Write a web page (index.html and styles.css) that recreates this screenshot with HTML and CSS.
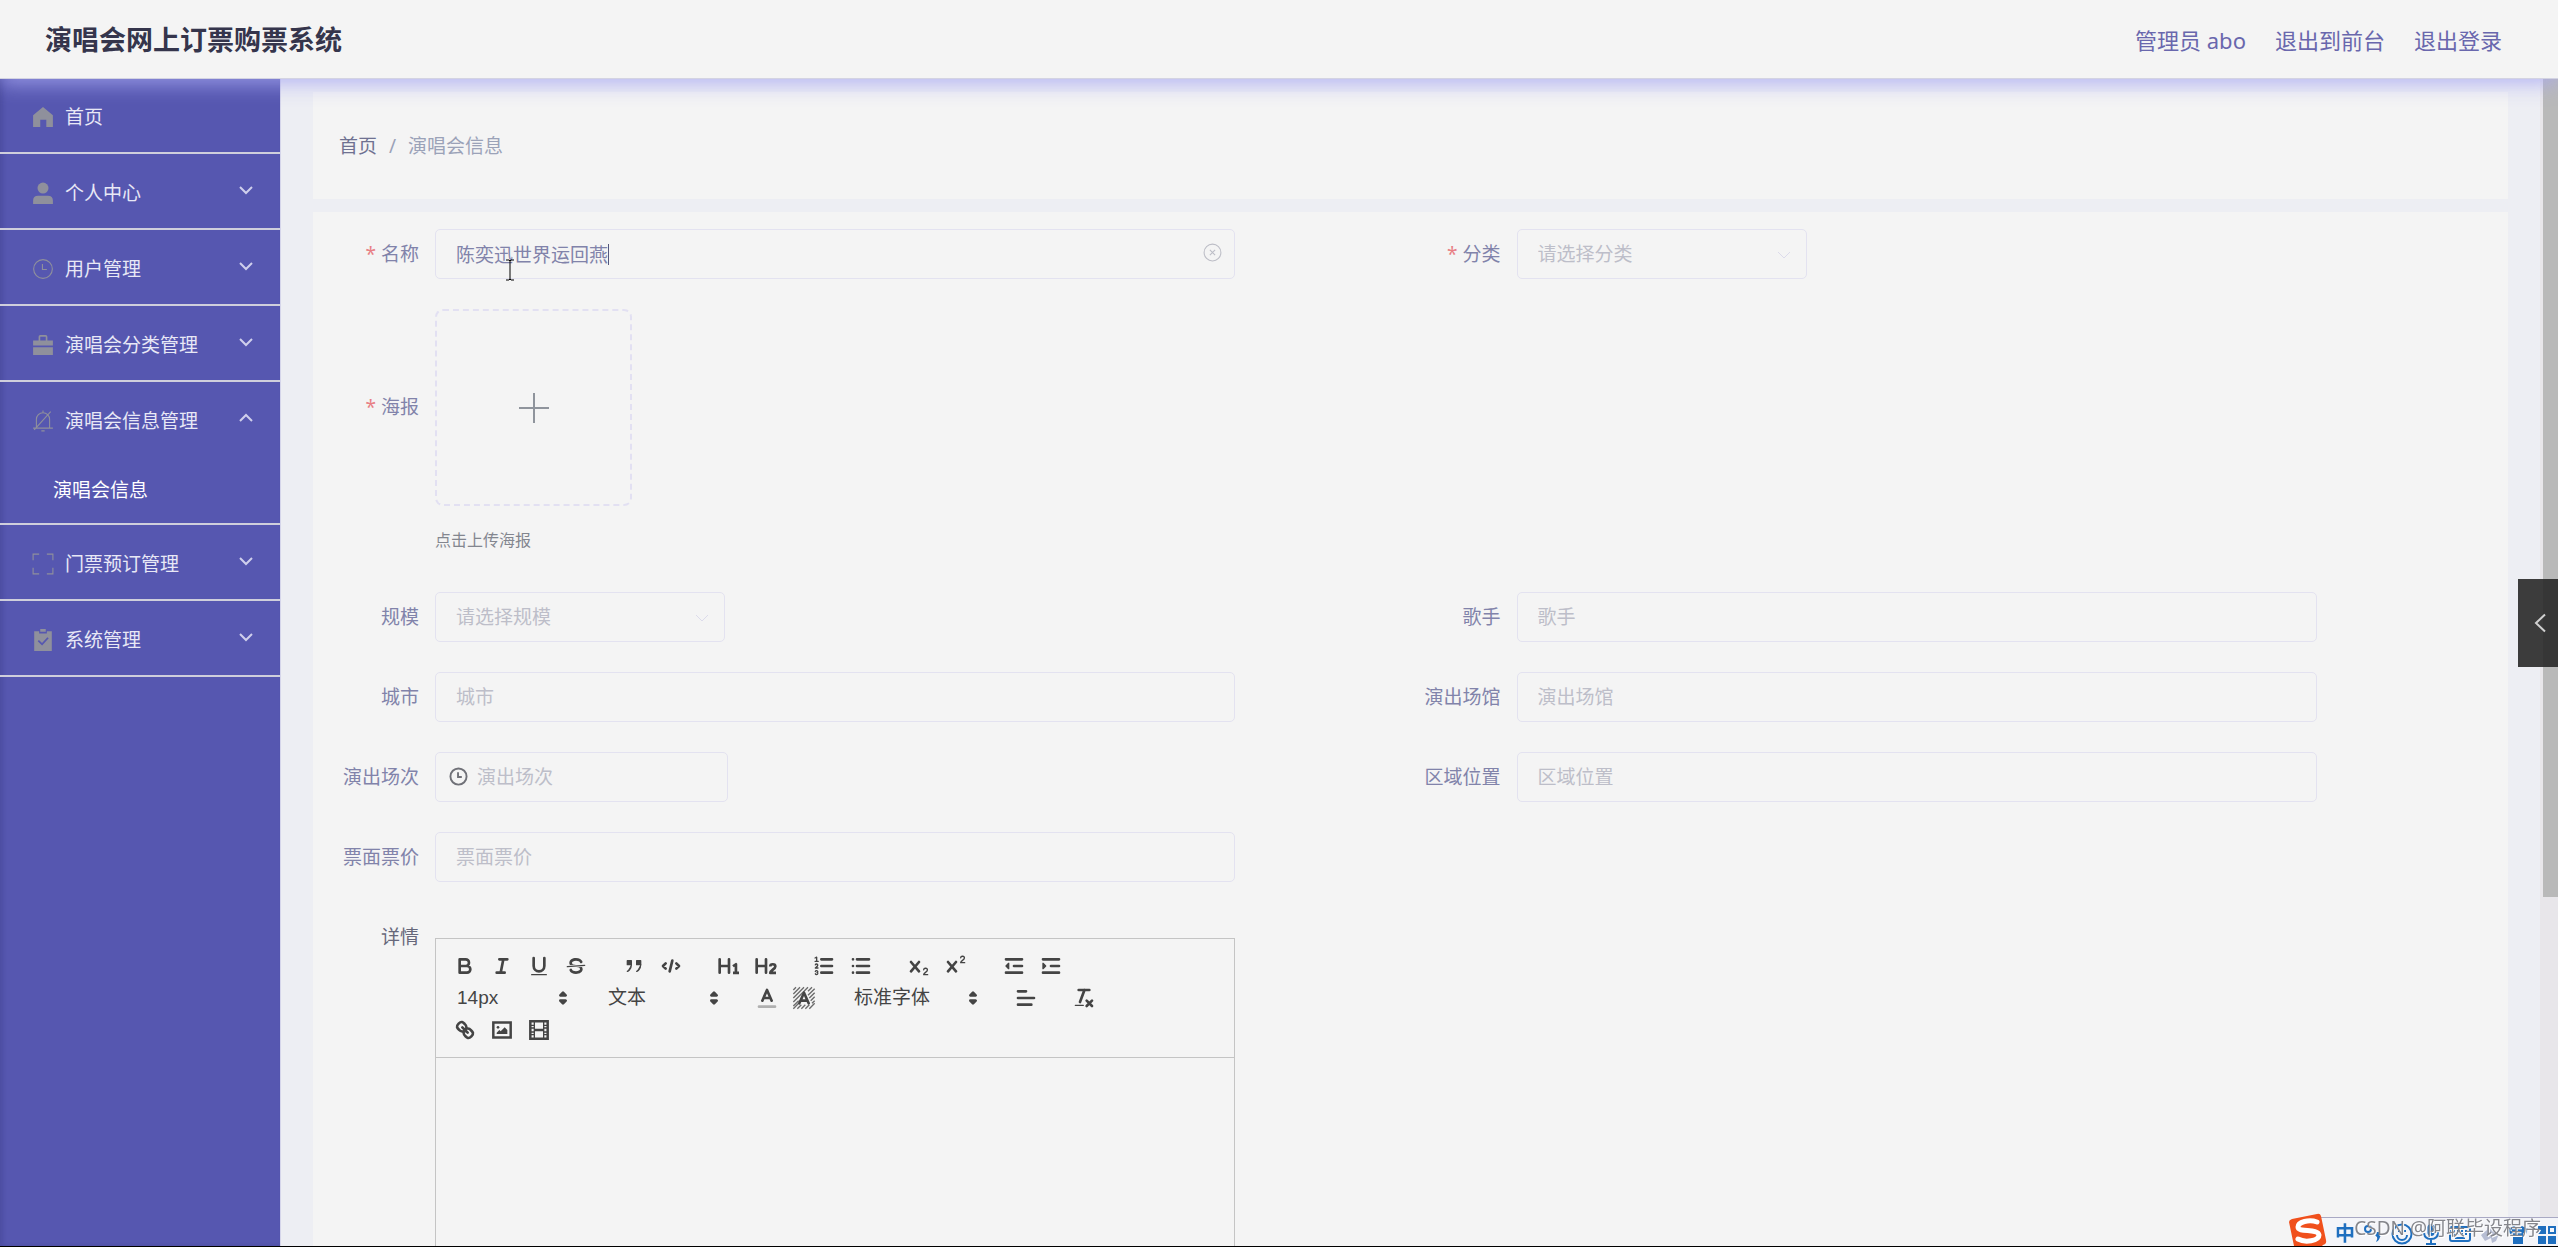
FILE: index.html
```html
<!DOCTYPE html>
<html lang="zh-CN">
<head>
<meta charset="utf-8">
<title>演唱会网上订票购票系统</title>
<link rel="stylesheet" href="styles.css">
</head>
<body>
<svg class="defs" aria-hidden="true">
  <symbol id="down" viewBox="0 0 16 10"><path d="M2 2l6 6 6-6"/></symbol>
  <symbol id="sorter" viewBox="0 0 18 18"><path d="M7 11l2 2 2-2zM7 7l2-2 2 2z"/></symbol>
  <symbol id="clock" viewBox="0 0 20 20"><circle cx="10" cy="10" r="8.5"/><path d="M9.500 5.500v5h4"/></symbol>
</svg>
<div class="app">
  <header class="topbar">
    <h1 class="brand">演唱会网上订票购票系统</h1>
    <nav class="account">
      <span>管理员 abo</span>
      <a href="#front">退出到前台</a>
      <a href="#logout">退出登录</a>
    </nav>
  </header>
  <div class="body">
    <aside class="sidebar">
      <ul class="menu">
        <li><a href="#home"><svg class="mi solid" viewBox="0 0 20 20"><path d="M10 1l9 7.500V19h-6v-6.500H7.500V19H1V8.500z"/></svg><span>首页</span></a></li>
        <li><a href="#me"><svg class="mi solid" viewBox="0 0 20 20"><circle cx="10" cy="5.500" r="5"/><path d="M1 20v-3q0-4.500 4.500-4.500h9q4.500 0 4.500 4.500v3z"/></svg><span>个人中心</span><svg class="chev"><use href="#down"/></svg></a></li>
        <li><a href="#users"><svg class="mi line" viewBox="0 0 20 20"><use href="#clock"/></svg><span>用户管理</span><svg class="chev"><use href="#down"/></svg></a></li>
        <li><a href="#types"><svg class="mi solid" viewBox="0 0 20 20"><path d="M1 6h5V2.500Q6 1 7.500 1h5Q14 1 14 2.500V6h5v4.500H1zM7.500 2.500V6h5V2.500zM1 12h18v7H1z"/></svg><span>演唱会分类管理</span><svg class="chev"><use href="#down"/></svg></a></li>
        <li>
          <a href="#concerts"><svg class="mi line" viewBox="0 0 20 20"><path d="M4 16V8.500a6 6 0 0 1 12 0V16M1 16.500h18M2 18L17 1.500M10 .5v2M8.500 19h3"/></svg><span>演唱会信息管理</span><svg class="chev up"><use href="#down"/></svg></a>
          <a class="sub" href="#concert">演唱会信息</a>
        </li>
        <li><a href="#orders"><svg class="mi line" viewBox="0 0 20 20"><path d="M1 6.500V1h5.500M13.500 1H19v5.500M19 13.500V19h-5.500M6.500 19H1v-5.500"/></svg><span>门票预订管理</span><svg class="chev"><use href="#down"/></svg></a></li>
        <li><a href="#system"><svg class="mi solid" viewBox="0 0 20 20"><path fill-rule="evenodd" d="M2 2h4.500v2h7V2H18v18H2zM5.200 11.200l4 3.800 6-6.500-1.200-1-4.900 5.300-2.800-2.700zM7.500 0h5v2.500h-5z"/></svg><span>系统管理</span><svg class="chev"><use href="#down"/></svg></a></li>
      </ul>
    </aside>
    <main class="content">
      <nav class="card crumbs"><a href="#home">首页</a><span class="slash">/</span><span>演唱会信息</span></nav>
      <form class="card form">
        <div class="item">
          <label class="req" for="name">名称</label>
          <div class="ctl caret"><input id="name" type="text" value="陈奕迅世界运回燕">
            <svg class="clear" viewBox="0 0 20 20"><circle cx="10" cy="10" r="8"/><path d="M7.500 7.500l5 5M12.500 7.500l-5 5"/></svg></div>
        </div>
        <div class="item">
          <label class="req" for="type">分类</label>
          <div class="ctl short"><select id="type"><option>请选择分类</option></select><svg class="arrow"><use href="#down"/></svg></div>
        </div>
        <div class="item full">
          <label class="req tall" for="poster">海报</label>
          <div class="uploader">
            <button class="drop" id="poster" type="button" aria-label="上传海报"><svg viewBox="0 0 32 32"><path d="M16 1v30M1 16h30"/></svg></button>
            <p class="tip">点击上传海报</p>
          </div>
        </div>
        <div class="item">
          <label for="scale">规模</label>
          <div class="ctl short"><select id="scale"><option>请选择规模</option></select><svg class="arrow"><use href="#down"/></svg></div>
        </div>
        <div class="item"><label for="singer">歌手</label><div class="ctl"><input id="singer" type="text" placeholder="歌手"></div></div>
        <div class="item"><label for="city">城市</label><div class="ctl"><input id="city" type="text" placeholder="城市"></div></div>
        <div class="item"><label for="venue">演出场馆</label><div class="ctl"><input id="venue" type="text" placeholder="演出场馆"></div></div>
        <div class="item"><label for="time">演出场次</label><div class="ctl short date"><svg class="when" viewBox="0 0 20 20"><use href="#clock"/></svg><input id="time" type="text" placeholder="演出场次"></div></div>
        <div class="item"><label for="area">区域位置</label><div class="ctl"><input id="area" type="text" placeholder="区域位置"></div></div>
        <div class="item full-row"><label for="price">票面票价</label><div class="ctl"><input id="price" type="text" placeholder="票面票价"></div></div>
        <div class="item">
          <label class="dark" for="detail">详情</label>
          <div class="editor">
            <div class="tools">
              <span class="group">
                <button type="button" aria-label="粗体"><svg viewBox="0 0 18 18"><path d="M5 4H9.500A2.500 2.500 0 0 1 9.500 9H5zM5 9h5.500A2.500 2.500 0 0 1 10.500 14H5z"/></svg></button>
                <button type="button" aria-label="斜体"><svg viewBox="0 0 18 18"><path d="M7 4h6M5 14h6M8 14L10 4"/></svg></button>
                <button type="button" aria-label="下划线"><svg viewBox="0 0 18 18"><path d="M5 3V9a4 4 0 0 0 8 0V3"/><rect class="f" x="3" y="15" width="12" height="1" rx=".5"/></svg></button>
                <button type="button" aria-label="删除线"><svg viewBox="0 0 18 18"><path class="thin" d="M15.500 8.500l-13 1"/><path class="f" d="M9.007,8C6.542,7.791,6,7.519,6,6.500,6,5.792,7.283,5,9,5c1.571,0,2.765.679,2.969,1.309a1,1,0,0,0,1.900-.617C13.356,4.106,11.354,3,9,3,6.200,3,4,4.538,4,6.500a3.200,3.200,0,0,0,.5,1.843Z"/><path class="f" d="M8.984,10C11.457,10.208,12,10.479,12,11.500c0,0.708-1.283,1.500-3,1.500-1.571,0-2.765-.679-2.969-1.309a1,1,0,1,0-1.900.617C4.644,13.894,6.646,15,9,15c2.800,0,5-1.538,5-3.500a3.200,3.200,0,0,0-.5-1.843Z"/></svg></button>
              </span>
              <span class="group">
                <button type="button" aria-label="引用"><svg viewBox="0 0 18 18"><path class="fs" d="M4 5h3v3H4zM11 5h3v3h-3z"/><path class="fs" d="M7,8c0,4.031-3,5-3,5M14,8c0,4.031-3,5-3,5"/></svg></button>
                <button type="button" aria-label="代码"><svg viewBox="0 0 18 18"><path d="M5 7L3 9l2 2M13 7l2 2-2 2M10 5L8 13"/></svg></button>
              </span>
              <span class="group">
                <button type="button" aria-label="一级标题"><svg viewBox="0 0 18 18"><path d="M2 4v10M9 4v10M2 9h7"/><path class="mid" d="M12 9.200l2.200-1.500v6.500M12 14.200h4.500"/></svg></button>
                <button type="button" aria-label="二级标题"><svg viewBox="0 0 18 18"><path d="M2 4v10M9 4v10M2 9h7"/><path class="mid" d="M12.200 9.300a1.900 1.600 0 0 1 3.800 0c0 1.900-3.800 2.900-3.800 4.900h4.300"/></svg></button>
              </span>
              <span class="group">
                <button type="button" aria-label="有序列表"><svg viewBox="0 0 18 18"><path d="M7 4h8M7 9h8M7 14h8"/><path class="thin" d="M2.300 3l1.200-.6V5.500M2.300 5.500h2.400M4.500 10.500h-2c0-.234,1.850-1.076,1.850-2.234A0.959,0.959,0,0,0,2.500,8.156M2.500,14.846a0.959,0.959,0,0,0,1.850-.109A0.700,0.700,0,0,0,3.750,14a0.688,0.688,0,0,0,.6-0.736,0.959,0.959,0,0,0-1.850-.109"/></svg></button>
                <button type="button" aria-label="无序列表"><svg viewBox="0 0 18 18"><path d="M6 4h9M6 9h9M6 14h9M3 4h0M3 9h0M3 14h0"/></svg></button>
              </span>
              <span class="group">
                <button type="button" aria-label="下标"><svg viewBox="0 0 18 18"><path d="M3 6l6 7M9 6l-6 7"/><path class="thin" d="M12.500 11.800a1.400 1.200 0 0 1 2.800.2c0 1.500-2.800 2-2.800 3.500h3"/></svg></button>
                <button type="button" aria-label="上标"><svg viewBox="0 0 18 18"><path d="M3 6l6 7M9 6l-6 7"/><path class="thin" d="M12.500 2.800a1.400 1.200 0 0 1 2.800.2c0 1.500-2.800 2-2.800 3.500h3"/></svg></button>
              </span>
              <span class="group">
                <button type="button" aria-label="减少缩进"><svg viewBox="0 0 18 18"><path d="M3 14h12M3 4h12M9 9h6"/><path class="fs" d="M5 7v4L3 9z"/></svg></button>
                <button type="button" aria-label="增加缩进"><svg viewBox="0 0 18 18"><path d="M3 14h12M3 4h12M9 9h6"/><path class="fs" d="M3 7v4l2-2z"/></svg></button>
              </span>
              <span class="group pick"><select aria-label="字号"><option>14px</option></select><svg><use href="#sorter"/></svg></span>
              <span class="group pick"><select aria-label="段落"><option>文本</option></select><svg><use href="#sorter"/></svg></span>
              <span class="group">
                <button type="button" aria-label="文字颜色"><svg viewBox="0 0 18 18"><path class="pale" d="M3 15.500h12"/><path d="M5.500 11L9 3l3.500 8M6.400 9h5.200"/></svg></button>
                <button type="button" aria-label="背景颜色"><svg viewBox="0 0 18 18"><path class="hatch" d="M1 3l2-2M1 6l5-5M1 9l8-8M1 12L12 1M1 15l4-4M1 17L5 13M9 4l3-3M12 4l3-3M12 7l5-5M13 9l4-4M14 11l3-3M15 13l2-2M4 17l3-3M7 17l3-3M10 17l3-3M13 17l4-4"/><path d="M5.500 13L9 5l3.500 8M6.400 11h5.200"/></svg></button>
              </span>
              <span class="group pick wide"><select aria-label="字体"><option>标准字体</option></select><svg><use href="#sorter"/></svg></span>
              <span class="group"><button type="button" aria-label="对齐"><svg viewBox="0 0 18 18"><path d="M3 9h12M3 14h10M3 4h6"/></svg></button></span>
              <span class="group"><button type="button" aria-label="清除格式"><svg viewBox="0 0 18 18"><path d="M5 3h8M6 12L9.350 3M11 11l4 4M15 11l-4 4"/><rect class="f" x="2" y="14" width="7" height="1" rx=".5"/></svg></button></span>
              <span class="group">
                <button type="button" aria-label="链接"><svg viewBox="0 0 18 18"><path d="M7 7l4 4M8.900,4.577a3.476,3.476,0,0,1,.36,4.679A3.476,3.476,0,0,1,4.577,8.900C3.185,7.500,2.035,6.400,4.217,4.217S7.500,3.185,8.900,4.577ZM13.423,9.100a3.476,3.476,0,0,0-4.679-.36,3.476,3.476,0,0,0,.36,4.679c1.392,1.392,2.500,2.542,4.679.36S14.815,10.500,13.423,9.100Z"/></svg></button>
                <button type="button" aria-label="图片"><svg viewBox="0 0 18 18"><path d="M2 3h14v12H2z" class="edge"/><circle class="f" cx="6" cy="7" r="1"/><path class="f" d="M5 12v-1l2-2 1 1 3-3 2 2v3z"/></svg></button>
                <button type="button" aria-label="视频"><svg viewBox="0 0 18 18"><path d="M2 2h14v14H2z" class="edge"/><path class="f" d="M5 3h1v12H5zM12 3h1v12h-1zM5 8h8v2H5zM3 5h3v1H3zM3 7h3v1H3zM3 10h3v1H3zM3 12h3v1H3zM12 5h3v1h-3zM12 7h3v1h-3zM12 10h3v1h-3zM12 12h3v1h-3z"/></svg></button>
              </span>
            </div>
            <textarea id="detail"></textarea>
          </div>
        </div>
      </form>
    </main>
    <div class="rail"><div class="thumb"></div></div>
  </div>
</div>

<button class="drawer" type="button" aria-label="展开"><svg viewBox="0 0 12 20"><path d="M11 1.500L2 10l9 8.500"/></svg></button>
<svg class="pointer" viewBox="0 0 10 22"><path d="M1 1h3l1 1 1-1h3M5 2v18M1 21h3l1-1 1 1h3"/></svg>

<div class="ime">
  <svg class="sogou" viewBox="0 0 38 33"><path fill="#f0501c" d="M3 6L28 1q3-1 4 2l5 24q1 4-3 5l-1 1H5L0 9q0-2 3-3z"/><path fill="none" stroke="#fff" stroke-width="5" stroke-linecap="round" d="M28 9C20 6 9 9 9 14c0 6 20 1 21 8 0 6-14 8-21 4"/></svg>
  <div class="imebar">
    <span>中</span>
    <svg viewBox="0 0 22 22"><circle cx="6" cy="6" r="3"/><path class="b" d="M13 11a3 3 0 1 1 5 3q-1 4-4 5 2-3 1-5-2-1-2-3z"/></svg>
    <svg viewBox="0 0 22 22"><circle cx="11" cy="11" r="9.500"/><path d="M6 12a5 5 0 0 0 10 0M8 7v2M14 7v2"/></svg>
    <svg viewBox="0 0 22 22"><rect class="b" x="7.500" y="1" width="7" height="12" rx="3.500"/><path d="M4 9q0 7 7 7t7-7M11 16v5M6 21h10"/></svg>
    <svg viewBox="0 0 22 22"><rect x="1" y="4" width="20" height="14" rx="2"/><path d="M4 8h2M8 8h2M12 8h2M16 8h2M4 11h2M8 11h2M12 11h2M16 11h2M6 15h10"/></svg>
    <svg viewBox="0 0 22 22"><path class="g" d="M3 12l6-5 1-4 5 6 6 2-3 7-4 2-1-5-6 3z"/></svg>
    <svg viewBox="0 0 22 22"><path class="b" d="M7 3q4 3 8 0l6 3-2 5-3-1v11H6V10l-3 1-2-5z"/></svg>
    <svg viewBox="0 0 22 22"><path class="b" d="M2 3h8v8H2zM2 13h8v8H2zM12 13h8v8h-8z"/><path d="M13 4h6v6h-6z"/></svg>
  </div>
</div>
<div class="mark">CSDN @阿联毕设程序</div>
</body>
</html>
```
FILE: styles.css
```css
* { box-sizing: border-box; }
body {
  margin: 0;
  background: #edeef3;
  color: #8183aa;
  font: 19px/24px "Noto Sans", "Noto Sans CJK SC", sans-serif;
}
a { color: inherit; text-decoration: none; }
button, input, select, textarea { font: inherit; color: inherit; background: none; border: 0; margin: 0; padding: 0; }
svg { fill: none; stroke: currentColor; }
.defs { position: absolute; width: 0; height: 0; }

.app { display: flex; flex-direction: column; height: 100vh; overflow: hidden; border-bottom: 1px solid #000; }
.topbar {
  position: relative;
  z-index: 2;
  flex: none;
  display: flex;
  align-items: center;
  justify-content: space-between;
  height: 78px;
  padding: 1px 56px 0 45px;
  background: #f4f4f4;
  box-shadow: 0 1px 0 #d3d3e2, 0 5px 20px rgba(168, 168, 243, .85);
}
.brand { margin: 0; font-size: 27px; line-height: 36px; font-weight: 700; color: #35354c; }
.account { display: flex; gap: 29px; font-size: 22px; color: #6967ad; }

.body { flex: 1; min-height: 0; display: flex; }
.sidebar {
  flex: none;
  width: 281px;
  background: #5657b0;
  border-right: 1px solid #d5d5ea;
  box-shadow: inset 3px 0 4px rgba(40, 40, 110, .2);
  color: #e8e8f6;
}
.menu { list-style: none; margin: 0; padding: 0; }
.menu li { border-bottom: 2px solid #cfcfdc; }
.menu a { display: flex; align-items: center; height: 74px; padding: 3px 26px 0 32px; }
.menu span { flex: 1; }
.menu .sub { height: 67px; padding: 0 0 0 53px; color: #fff; }
.mi { width: 22px; height: 22px; margin-right: 11px; color: #8f909c; }
.solid { fill: currentColor; stroke: none; }
.line { stroke-width: 1; }
.chev { width: 16px; height: 10px; margin-bottom: 6px; stroke-width: 2; color: #cfcfec; }
.up { transform: rotate(180deg); }

.content { flex: 1; min-width: 0; padding: 14px 32px 0; overflow: hidden; }
.card { background: #f4f4f4; }
.crumbs { display: flex; align-items: center; height: 107px; padding: 0 26px; margin-bottom: 13px; color: #9ba2b8; }
.crumbs a { color: #6f7191; }
.slash { margin: 0 12px; }
.form { display: grid; grid-template-columns: 1fr 1fr; row-gap: 30px; padding: 17px 16px 40px; }
.item { display: flex; align-items: flex-start; }
.full, .full-row { grid-column: 1 / -1; }
.full-row { padding-right: 50%; }
label { flex: none; width: 106px; padding-right: 16px; text-align: right; line-height: 50px; white-space: nowrap; }
.req::before { content: "*"; margin-right: 5px; color: #e87f85; }
.tall { line-height: 197px; }
.dark { color: #66677a; }
.ctl { position: relative; width: 82%; margin-right: auto; flex: 0 1 800px; }
.ctl input, .ctl select {
  display: block;
  width: 100%;
  height: 50px;
  padding: 0 20px;
  border: 1px solid #e3e2f0;
  border-radius: 5px;
  outline: 0;
  appearance: none;
}
.ctl select, ::placeholder { color: #bdbec9; opacity: 1; }
.short { flex-basis: 290px; }
.date { flex-basis: 293px; }
.ctl.date input { padding-left: 41px; }
.caret::after { content: ""; position: absolute; left: 173px; top: 15px; width: 1px; height: 21px; background: #55567c; }
.clear { position: absolute; right: 12px; top: 13px; width: 21px; height: 21px; color: #bcbdc6; }
.arrow { position: absolute; right: 15px; top: 21px; width: 16px; height: 10px; color: #dcdbeb; }
.when { position: absolute; left: 14px; top: 15px; width: 19px; height: 19px; color: #707178; stroke-width: 2; }
.drop {
  display: flex;
  align-items: center;
  justify-content: center;
  width: 197px;
  height: 197px;
  border: 2px dashed #e2e0f2;
  border-radius: 8px;
  color: #8f949c;
}
.drop svg { width: 32px; height: 32px; stroke-width: 2; }
.tip { margin: 24px 0 12px; font-size: 16px; line-height: 20px; color: #83868f; }

.editor { flex: 0 1 800px; min-width: 0; margin-top: 26px; border: 1px solid #c4c4c4; color: #444; }
.tools { display: flex; flex-wrap: wrap; padding: 11px 10px; border-bottom: 1px solid #c4c4c4; }
.group { display: flex; align-items: center; height: 32px; margin-right: 21px; }
.group button { display: flex; justify-content: center; width: 37px; }
.group svg { width: 24px; height: 24px; stroke-width: 2; stroke-linecap: round; stroke-linejoin: round; }
.group .f { fill: #444; stroke: none; }
.group .fs { fill: #444; stroke-width: 1; }
.group .thin { stroke-width: 1; }
.group .mid { stroke-width: 2; stroke-linecap: butt; }
.group .edge { stroke-linejoin: miter; transform: scale(.93); transform-origin: 9px 9px; }
.group .pale { stroke: #b0b0b0; }
.group .hatch { stroke: #6a6a6a; stroke-width: 1; stroke-linecap: butt; }
.pick { position: relative; width: 131px; margin-right: 20px; font-family: "Liberation Sans", "Noto Sans CJK SC", sans-serif; }
.wide { width: 144px; }
.pick select { width: 100%; padding-left: 11px; appearance: none; }
.pick svg { position: absolute; right: 2px; top: 4px; fill: #444; }
.editor textarea { display: block; width: 100%; height: 400px; padding: 16px 20px; resize: none; outline: 0; }

.rail { flex: none; width: 18px; padding-left: 3px; background: #e8e6ea; }
.thumb { height: 70%; margin-top: 1px; background: #b9b9b9; }
.drawer {
  position: fixed;
  z-index: 3;
  right: 0;
  top: 579px;
  display: flex;
  align-items: center;
  justify-content: center;
  width: 40px;
  height: 88px;
  padding-left: 4px;
  background: rgba(40, 40, 40, .9);
  color: #d0d0d0;
}
.drawer svg { width: 12px; height: 20px; stroke-width: 2; }
.pointer { position: absolute; left: 505px; top: 259px; width: 10px; height: 22px; color: #000; stroke-width: 1; }

.ime { position: fixed; right: 0; bottom: 1px; display: flex; align-items: flex-end; }
.sogou { width: 38px; height: 33px; stroke: none; margin-right: -6px; z-index: 1; }
.imebar { display: flex; align-items: center; gap: 7px; height: 29px; padding: 3px 0 0 14px; background: #f4f5f9; border-top: 1px solid #a9a9c4; color: #1f6fbf; }
.imebar span { font-size: 20px; font-weight: 700; line-height: 24px; }
.imebar svg { width: 22px; height: 22px; stroke-width: 2; }
.imebar .b { fill: currentColor; stroke: none; }
.imebar .g { fill: #b6bdd3; stroke: none; }
.mark { position: fixed; right: 17px; bottom: 7px; font-size: 19px; color: #85868c; text-shadow: 1px 1px 0 #fff; white-space: nowrap; }
```
